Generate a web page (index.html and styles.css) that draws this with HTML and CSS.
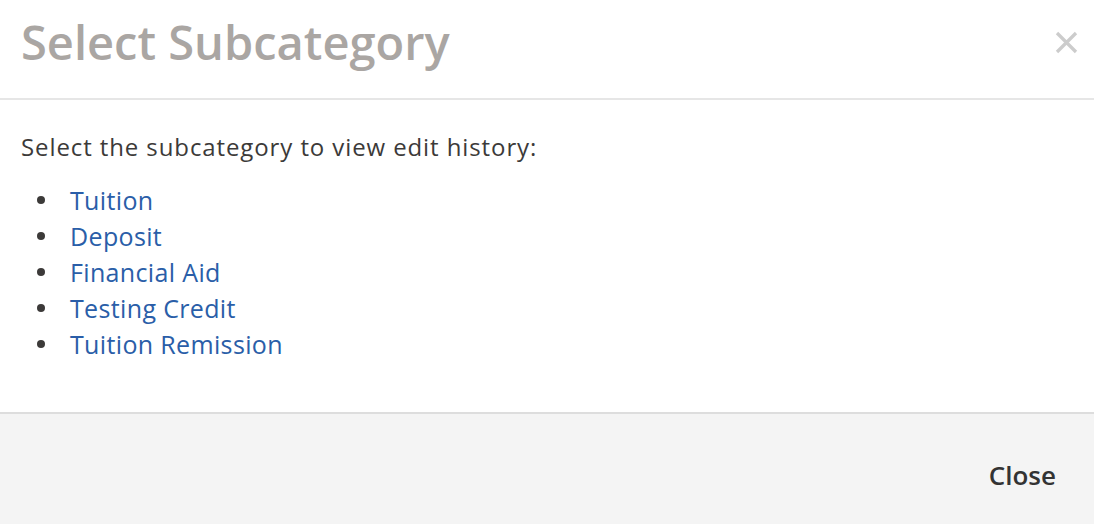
FILE: index.html
```html
<!DOCTYPE html>
<html>
<head>
<meta charset="utf-8">
<link rel="stylesheet" href="styles.css">
</head>
<body>
<div class="modal">
  <div class="modal-header">
    <h1 class="modal-title">Select Subcategory</h1>
    <button class="close-x" aria-label="Close">
      <svg width="23" height="23" viewBox="0 0 23 23"><path d="M2 2 L21 21 M21 2 L2 21" stroke="#cccccc" stroke-width="3.3" fill="none"/></svg>
    </button>
  </div>
  <div class="modal-body">
    <p class="intro">Select the subcategory to view edit history:</p>
    <ul class="sub-list">
      <li><a href="#">Tuition</a></li>
      <li><a href="#">Deposit</a></li>
      <li><a href="#">Financial Aid</a></li>
      <li><a href="#">Testing Credit</a></li>
      <li><a href="#">Tuition Remission</a></li>
    </ul>
  </div>
  <div class="modal-footer">
    <button class="close-btn">Close</button>
  </div>
</div>
</body>
</html>
```
FILE: styles.css
```css
html, body {
  margin: 0;
  padding: 0;
  background: #ffffff;
  font-family: "Open Sans", sans-serif;
}
.modal {
  width: 1094px;
  height: 524px;
  display: flex;
  flex-direction: column;
}
.modal-header {
  height: 98px;
  border-bottom: 2px solid #e6e6e6;
  display: flex;
  align-items: center;
  justify-content: space-between;
  padding: 0 16px 0 21px;
  box-sizing: content-box;
}
.modal-title {
  margin: 0;
  font-size: 47px;
  font-weight: 600;
  color: #aaa6a3;
  line-height: 1;
  position: relative;
  top: -7px;
}
.close-x {
  background: none;
  border: 0;
  padding: 0;
  width: 23px;
  height: 23px;
  position: relative;
  top: -7px;
  cursor: pointer;
}
.close-x svg { display: block; }
.modal-body {
  flex: 1;
  padding: 0 21px;
  border-bottom: 2px solid #dddddd;
}
.intro {
  margin: 32px 0 0;
  font-size: 24px;
  letter-spacing: 0.9px;
  line-height: 30px;
  color: #3c3a39;
}
.sub-list {
  list-style: none;
  margin: 20px 0 0;
  padding: 0;
  font-size: 25px;
  letter-spacing: 0.35px;
  line-height: 36px;
}
.sub-list li {
  display: flex;
  align-items: center;
}
.sub-list li::before {
  content: "";
  width: 8px;
  height: 8px;
  border-radius: 50%;
  background: #3c3a39;
  margin: 0 25px 0 16px;
  flex: none;
}
.sub-list a {
  color: #2a5ea8;
  text-decoration: none;
}
.modal-footer {
  height: 110px;
  background: #f4f4f4;
  display: flex;
  align-items: center;
  justify-content: flex-end;
  padding: 0 38px 0 0;
}
.close-btn {
  background: none;
  border: 0;
  font-family: "Open Sans", sans-serif;
  font-weight: 600;
  font-size: 26px;
  color: #333333;
  padding: 0;
  position: relative;
  top: 6px;
  cursor: pointer;
}
```
